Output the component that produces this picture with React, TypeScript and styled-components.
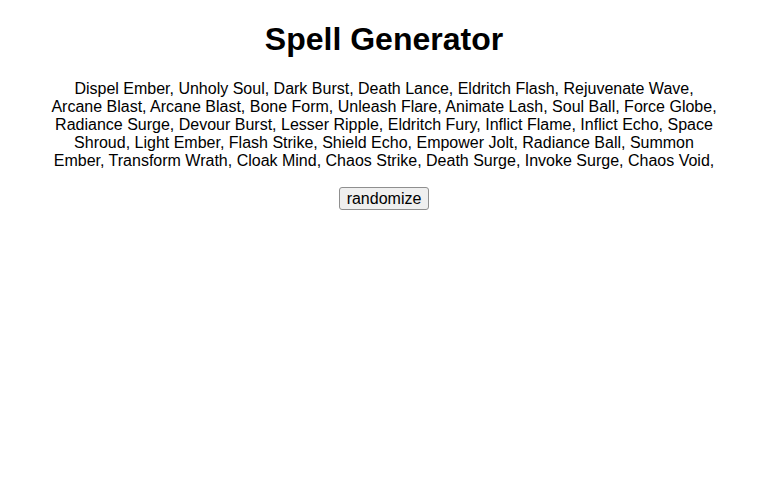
import React, { useState } from 'react';
import styled, { createGlobalStyle } from 'styled-components';

const GlobalStyle = createGlobalStyle`
  body {
    margin: 0;
    background: #ffffff;
    color: #000000;
    font-family: "Liberation Sans", Arial, sans-serif;
  }
`;

const prefixes = ['Dispel', 'Unholy', 'Dark', 'Death', 'Eldritch', 'Rejuvenate', 'Arcane', 'Bone', 'Unleash', 'Animate', 'Soul', 'Force', 'Radiance', 'Devour', 'Lesser', 'Inflict', 'Space', 'Light', 'Flash', 'Shield', 'Empower', 'Summon', 'Transform', 'Cloak', 'Chaos', 'Invoke'];
const suffixes = ['Ember', 'Soul', 'Burst', 'Lance', 'Flash', 'Wave', 'Blast', 'Form', 'Flare', 'Lash', 'Ball', 'Globe', 'Surge', 'Ripple', 'Fury', 'Flame', 'Echo', 'Shroud', 'Strike', 'Jolt', 'Wrath', 'Mind', 'Void'];

const initialSpells = [
    'Dispel Ember', 'Unholy Soul', 'Dark Burst', 'Death Lance', 'Eldritch Flash', 'Rejuvenate Wave',
    'Arcane Blast', 'Arcane Blast', 'Bone Form', 'Unleash Flare', 'Animate Lash', 'Soul Ball', 'Force Globe',
    'Radiance Surge', 'Devour Burst', 'Lesser Ripple', 'Eldritch Fury', 'Inflict Flame', 'Inflict Echo', 'Space Shroud',
    'Light Ember', 'Flash Strike', 'Shield Echo', 'Empower Jolt', 'Radiance Ball', 'Summon Ember',
    'Transform Wrath', 'Cloak Mind', 'Chaos Strike', 'Death Surge', 'Invoke Surge', 'Chaos Void',
];

const pick = (list: string[]) => list[Math.floor(Math.random() * list.length)];

const App = () => {
    const [spells, setSpells] = useState<string[]>(initialSpells);

    const randomize = () => {
        setSpells(initialSpells.map(() => `${pick(prefixes)} ${pick(suffixes)}`));
    };

    return (
        <Page>
            <GlobalStyle />
            <Title>Spell Generator</Title>
            <SpellList>
                {spells.map(spell => `${spell}, `).join('')}
            </SpellList>
            <Actions>
                <RandomButton onClick={randomize}>randomize</RandomButton>
            </Actions>
        </Page>
    );
};

const Page = styled.div`
  padding: 21px 8px 8px;
  text-align: center;
`;

const Title = styled.h1`
  font-size: 32px;
  font-weight: bold;
  margin: 0 0 22px;
`;

const SpellList = styled.p`
  font-size: 16px;
  max-width: 670px;
  margin: 0 auto 17px;
`;

const Actions = styled.div`
  display: flex;
  justify-content: center;
`;

const RandomButton = styled.button`
  font-family: inherit;
  font-size: 16px;
  padding: 2px 7px 1px;
  color: #000000;
  background: #efefef;
  border: 1px solid #8f8f8f;
  border-radius: 3px;
  cursor: pointer;
`;

export default App;
